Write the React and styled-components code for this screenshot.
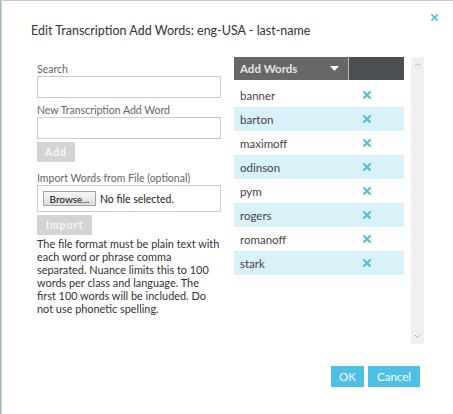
import React from "react";
import styled, { createGlobalStyle } from "styled-components";

const Global = createGlobalStyle`
  html, body { margin: 0; padding: 0; background: #ffffff; }
  body { font-family: Lato, "Open Sans", sans-serif; }
  * { box-sizing: border-box; }
`;

const Frame = styled.div`
  width: 453px;
  height: 414px;
  border-left: 1px solid #a9b9c4;
  display: flex;
`;

const Dialog = styled.div`
  position: relative;
  flex: 1;
  border-top: 1px solid #c9c9c9;
  border-left: 1px solid #d4d4d4;
  background: #fff;
  display: flex;
  flex-direction: column;
`;

const Close = styled.button`
  position: absolute;
  top: 11px;
  right: 14px;
  width: 10px;
  height: 10px;
  padding: 0;
  border: 0;
  background: none;
  display: flex;
  align-items: center;
  justify-content: center;
`;

const Title = styled.h1`
  margin: 0;
  padding: 22px 0 0 29px;
  height: 56px;
  font-size: 12.5px;
  line-height: 16px;
  font-weight: 400;
  color: #333;
`;

const Body = styled.div`
  display: flex;
  height: 287px;
  padding-left: 35px;
  gap: 13px;
`;

const LeftCol = styled.div`
  width: 184px;
  padding-top: 6px;
  display: flex;
  flex-direction: column;
`;

const Label = styled.label`
  display: block;
  font-size: 10.5px;
  line-height: 13px;
  color: #666;
  margin-top: ${(p) => p.$mt || 0}px;
`;

const Input = styled.input`
  display: block;
  width: 184px;
  height: ${(p) => p.$h || 22}px;
  border: 1px solid #cccccc;
  background: #fff;
  margin: 0;
  padding: 2px 4px;
`;

const FileBox = styled.div`
  width: 184px;
  height: 27px;
  border: 1px solid #cccccc;
  display: flex;
  align-items: center;
  padding-left: 5px;
  gap: 4px;
  font-size: 10.5px;
  color: #222;
`;

const Browse = styled.span`
  display: inline-flex;
  align-items: center;
  justify-content: center;
  width: 53px;
  height: 15px;
  border: 1px solid #a3a3a3;
  background: linear-gradient(#f6f6f6, #dddddd);
  font-size: 10px;
  color: #111;
`;

const GrayButton = styled.button`
  display: block;
  width: ${(p) => p.$w}px;
  height: 20px;
  margin-top: 3px;
  border: 0;
  padding: 0;
  background: #d4d4d4;
  color: #f7f7f7;
  font-family: inherit;
  font-size: 10.5px;
  font-weight: 700;
  letter-spacing: 1px;
`;

const Help = styled.p`
  margin: 2px 0 0;
  font-size: 10.9px;
  line-height: 13px;
  color: #333;
  white-space: nowrap;
`;

const RightCol = styled.div`
  display: flex;
  gap: 7px;
`;

const Table = styled.div`
  width: 170px;
  display: flex;
  flex-direction: column;
`;

const HeaderRow = styled.div`
  display: flex;
  height: 23px;
  margin-bottom: 3px;
`;

const HeadCell = styled.div`
  display: flex;
  align-items: center;
  justify-content: space-between;
  background: ${(p) => p.$bg};
  width: ${(p) => p.$w}px;
  padding: 0 9px 0 6px;
  color: #e4e4e4;
  font-size: 11.5px;
  font-weight: 700;
  border-right: ${(p) => (p.$sep ? "1px solid #b8b8b8" : "0")};
`;

const Row = styled.div`
  display: flex;
  align-items: center;
  height: 24px;
  background: ${(p) => (p.$alt ? "#d9f1f9" : "#ffffff")};
  font-size: 11.5px;
  color: #444;
`;

const Word = styled.span`
  width: 128px;
  padding-left: 6px;
`;

const Remove = styled.span`
  display: flex;
  align-items: center;
  justify-content: center;
  width: 10px;
  height: 10px;
`;

const Scroll = styled.div`
  width: 13px;
  height: 287px;
  background: #f0f0f0;
  display: flex;
  flex-direction: column;
  justify-content: space-between;
  align-items: center;
  padding: 5px 0;
`;

const Footer = styled.div`
  display: flex;
  justify-content: flex-end;
  gap: 4px;
  padding: 22px 33px 0 0;
`;

const BlueButton = styled.button`
  height: 21px;
  width: ${(p) => p.$w}px;
  border: 0;
  padding: 0;
  background: #4dc0e3;
  color: #fff;
  font-family: inherit;
  font-size: 11.5px;
`;

const XIcon = ({ size = 8, color = "#4fbde2", w = 2 }) => (
  <svg width={size} height={size} viewBox="0 0 8 8">
    <path d="M1 1 L7 7 M7 1 L1 7" stroke={color} strokeWidth={w} strokeLinecap="square" />
  </svg>
);

const Chevron = ({ up }) => (
  <svg width="7" height="5" viewBox="0 0 7 5">
    <path d={up ? "M1 4 L3.5 1.5 L6 4" : "M1 1 L3.5 3.5 L6 1"} stroke="#b5b5b5" strokeWidth="1" fill="none" />
  </svg>
);

const words = ["banner", "barton", "maximoff", "odinson", "pym", "rogers", "romanoff", "stark"];

export default function App() {
  return (
    <>
      <Global />
      <Frame>
        <Dialog>
          <Close aria-label="close">
            <XIcon size={7} w={1.8} />
          </Close>
          <Title>Edit Transcription Add Words: eng-USA - last-name</Title>
          <Body>
            <LeftCol>
              <Label>Search</Label>
              <Input />
              <Label $mt={6}>New Transcription Add Word</Label>
              <Input />
              <GrayButton $w={38}>Add</GrayButton>
              <Label $mt={10}>Import Words from File (optional)</Label>
              <FileBox>
                <Browse>Browse...</Browse>
                <span>No file selected.</span>
              </FileBox>
              <GrayButton $w={55}>Import</GrayButton>
              <Help>
                The file format must be plain text with
                <br />
                each word or phrase comma
                <br />
                separated. Nuance limits this to 100
                <br />
                words per class and language. The
                <br />
                first 100 words will be included. Do
                <br />
                not use phonetic spelling.
              </Help>
            </LeftCol>
            <RightCol>
              <Table>
                <HeaderRow>
                  <HeadCell $bg="#676767" $w={115} $sep>
                    <span>Add Words</span>
                    <svg width="9" height="5" viewBox="0 0 9 5">
                      <path d="M0 0 H9 L4.5 5 Z" fill="#ffffff" />
                    </svg>
                  </HeadCell>
                  <HeadCell $bg="#4a5052" $w={55} />
                </HeaderRow>
                {words.map((w, i) => (
                  <Row key={w} $alt={i % 2 === 1}>
                    <Word>{w}</Word>
                    <Remove>
                      <XIcon />
                    </Remove>
                  </Row>
                ))}
              </Table>
              <Scroll>
                <Chevron up />
                <Chevron />
              </Scroll>
            </RightCol>
          </Body>
          <Footer>
            <BlueButton $w={33}>OK</BlueButton>
            <BlueButton $w={52}>Cancel</BlueButton>
          </Footer>
        </Dialog>
      </Frame>
    </>
  );
}
